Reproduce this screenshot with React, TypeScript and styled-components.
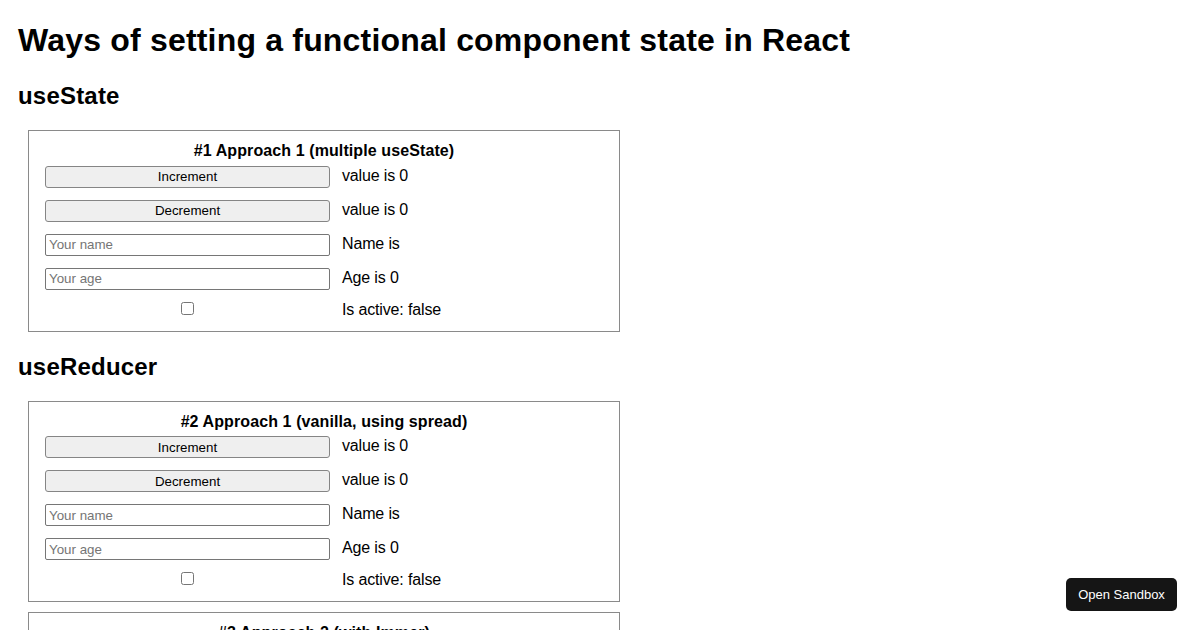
import React, { useState } from "react";
import styled, { createGlobalStyle } from "styled-components";

const GlobalStyle = createGlobalStyle`
  html, body {
    margin: 0;
    padding: 0;
    background: #ffffff;
  }
  body {
    font-family: "Liberation Sans", Arial, sans-serif;
    color: #000000;
  }
  * { box-sizing: border-box; }
`;

const Page = styled.div`
  padding: 22px 18px 40px;
`;

const Title = styled.h1`
  margin: 0 0 23px;
  font-size: 32px;
  font-weight: 700;
  line-height: normal;
  letter-spacing: 0.19px;
`;

const Section = styled.h2`
  margin: 21px 0 20px;
  font-size: 24px;
  font-weight: 700;
  line-height: 28px;
  letter-spacing: 0.2px;
`;

const Card = styled.div`
  width: 592px;
  margin: 10px 0 10px 10px;
  border: 1px solid #8a8a8a;
  padding: 11px 16px 12px;
`;

const CardTitle = styled.div`
  font-size: 16px;
  font-weight: 700;
  text-align: center;
  line-height: normal;
  letter-spacing: 0.1px;
  margin-bottom: 5.6px;
`;

const Rows = styled.div`
  display: flex;
  flex-direction: column;
  gap: 12px;
`;

const Row = styled.div<{ $tight?: boolean }>`
  display: grid;
  grid-template-columns: 285px 1fr;
  column-gap: 12px;
  align-items: start;
  margin-top: ${(p) => (p.$tight ? "-2px" : "0")};
`;

const Value = styled.span`
  padding-top: 1px;
  font-size: 16px;
  line-height: normal;
  letter-spacing: -0.15px;
`;

const Button = styled.button`
  height: 22px;
  width: 100%;
  margin: 0;
  padding: 1px 6px;
  font-family: "Liberation Sans", Arial, sans-serif;
  font-size: 13.33px;
  color: #000;
  background: #efefef;
  border: 1px solid #858585;
  border-radius: 3px;
`;

const Input = styled.input`
  height: 22px;
  width: 100%;
  margin: 0;
  padding: 1px 3px;
  font-family: "Liberation Sans", Arial, sans-serif;
  font-size: 13.33px;
  color: #000;
  background: #fff;
  border: 1px solid #767676;
  border-radius: 2px;
  &::placeholder {
    color: #757575;
  }
`;

const CheckCell = styled.div`
  display: flex;
  justify-content: center;
`;

const Check = styled.input`
  width: 13px;
  height: 13px;
  margin: 2px 0 4px;
`;

const SandboxButton = styled.button`
  position: fixed;
  right: 23px;
  bottom: 19px;
  width: 111px;
  height: 33px;
  padding: 0;
  border: none;
  border-radius: 5px;
  background: #151515;
  color: #ffffff;
  font-family: "Liberation Sans", Arial, sans-serif;
  font-size: 13px;
`;

function Approach({ title }: { title: string }) {
  const [count, setCount] = useState(0);
  const [count2, setCount2] = useState(0);
  const [name, setName] = useState("");
  const [age, setAge] = useState("");
  const [active, setActive] = useState(false);
  return (
    <Card>
      <CardTitle>{title}</CardTitle>
      <Rows>
        <Row>
          <Button onClick={() => setCount(count + 1)}>Increment</Button>
          <Value>value is {count}</Value>
        </Row>
        <Row>
          <Button onClick={() => setCount2(count2 - 1)}>Decrement</Button>
          <Value>value is {count2}</Value>
        </Row>
        <Row>
          <Input placeholder="Your name" value={name} onChange={(e) => setName(e.target.value)} />
          <Value>Name is {name}</Value>
        </Row>
        <Row>
          <Input placeholder="Your age" value={age} onChange={(e) => setAge(e.target.value)} />
          <Value>Age is {age === "" ? 0 : age}</Value>
        </Row>
        <Row $tight>
          <CheckCell>
            <Check type="checkbox" checked={active} onChange={(e) => setActive(e.target.checked)} />
          </CheckCell>
          <Value>Is active: {active ? "true" : "false"}</Value>
        </Row>
      </Rows>
    </Card>
  );
}

export default function App() {
  return (
    <>
      <GlobalStyle />
      <Page>
        <Title>Ways of setting a functional component state in React</Title>
        <Section>useState</Section>
        <Approach title="#1 Approach 1 (multiple useState)" />
        <Section>useReducer</Section>
        <Approach title="#2 Approach 1 (vanilla, using spread)" />
        <Approach title="#3 Approach 2 (with Immer)" />
      </Page>
      <SandboxButton>Open Sandbox</SandboxButton>
    </>
  );
}
